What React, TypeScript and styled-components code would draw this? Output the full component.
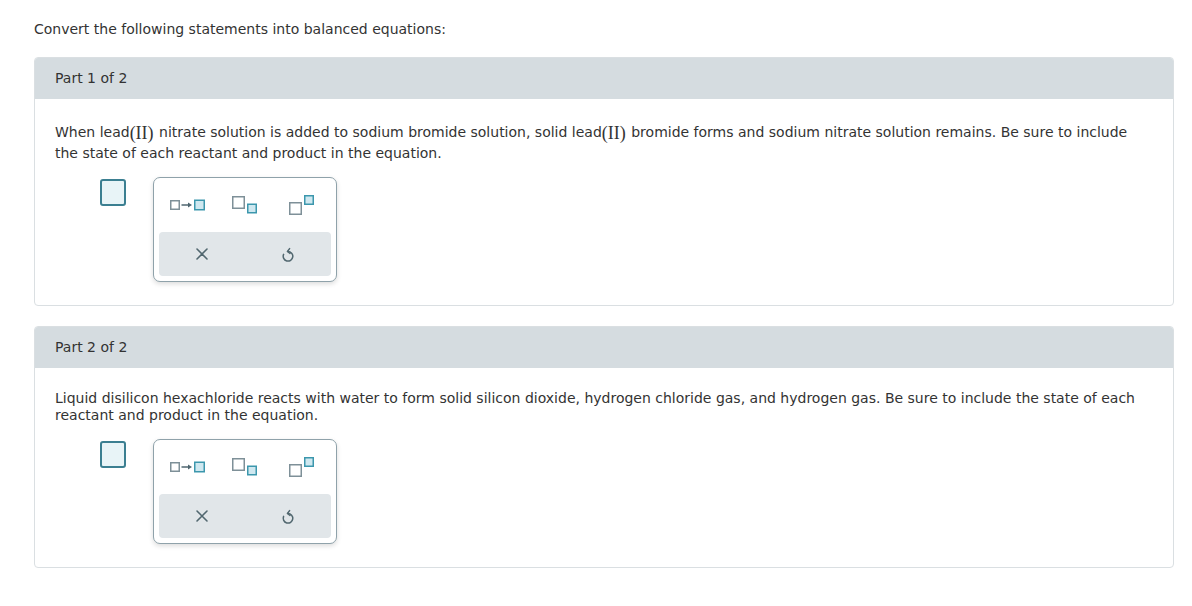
import React from "react";
import styled, { createGlobalStyle } from "styled-components";

const GlobalStyle = createGlobalStyle`
  html, body {
    margin: 0;
    padding: 0;
    background: #ffffff;
  }
  body {
    font-family: "DejaVu Sans", Verdana, sans-serif;
    font-size: 14px;
    color: #333333;
  }
`;

const Page = styled.div`
  padding: 21px 18px 20px 34px;
`;

const Intro = styled.p`
  margin: 0 0 19px 0;
  line-height: 17px;
`;

const Card = styled.section`
  border: 1px solid #dadfe2;
  border-radius: 4px;
  overflow: hidden;
  margin-bottom: 20px;
`;

const CardHeader = styled.div`
  height: 41px;
  display: flex;
  align-items: center;
  padding: 0 20px;
  background: #d5dce0;
  line-height: 17px;
`;

const CardBody = styled.div`
  padding: 22px 20px 23px 20px;
`;

const Statement = styled.p`
  margin: 0;
  line-height: 17px;
`;

const Math = styled.span`
  font-family: "Liberation Serif", "DejaVu Serif", serif;
  font-size: 18px;
  line-height: 24px;
  display: inline-block;
  vertical-align: -2px;
  margin: 0 1px 0 0;
`;

const EquationRow = styled.div`
  display: flex;
  align-items: flex-start;
  margin-top: 15px;
  padding-left: 45px;
  gap: 27px;
`;

const AnswerBox = styled.div`
  margin-top: 2px;
  width: 22px;
  height: 23px;
  border: 2px solid #3b7f91;
  border-radius: 3px;
  background: #e8f4f7;
`;

const Palette = styled.div`
  width: 172px;
  height: 98px;
  padding: 0 5px 5px 5px;
  border: 1px solid #8fa2aa;
  border-radius: 7px;
  background: #ffffff;
  box-shadow: 0 2px 5px rgba(0, 0, 0, 0.14);
  display: flex;
  flex-direction: column;
`;

const TemplateRow = styled.div`
  height: 54px;
  display: grid;
  grid-template-columns: repeat(3, 1fr);
  align-items: center;
  justify-items: center;
`;

const ToolButton = styled.button`
  border: none;
  background: transparent;
  padding: 0;
  display: flex;
  align-items: center;
  justify-content: center;
  cursor: pointer;
  line-height: 0;
`;

const ActionRow = styled.div`
  height: 44px;
  background: #e1e6e9;
  border-radius: 4px;
  display: grid;
  grid-template-columns: 1fr 1fr;
  align-items: center;
  justify-items: center;
`;

const GRAY = "#7e9098";
const TEAL = "#3c97ad";
const TEAL_FILL = "#cfe8f0";

const ArrowIcon = () => (
  <svg width="36" height="12" viewBox="0 0 36 12">
    <rect x="0.75" y="1.75" width="8.5" height="8.5" fill="#fff" stroke={GRAY} strokeWidth="1.5" />
    <line x1="11.5" y1="6" x2="19" y2="6" stroke="#4f6670" strokeWidth="1.5" />
    <polygon points="18,3.5 22,6 18,8.5" fill="#4f6670" />
    <rect x="24.75" y="1.25" width="9.5" height="9.5" fill={TEAL_FILL} stroke={TEAL} strokeWidth="1.5" />
  </svg>
);

const SubscriptIcon = () => (
  <svg width="26" height="18" viewBox="0 0 26 18">
    <rect x="0.75" y="0.75" width="11.5" height="11.5" fill="#fff" stroke={GRAY} strokeWidth="1.5" />
    <rect x="15.75" y="8.25" width="8.5" height="8.5" fill={TEAL_FILL} stroke={TEAL} strokeWidth="1.5" />
  </svg>
);

const SuperscriptIcon = () => (
  <svg width="26" height="20" viewBox="0 0 26 20">
    <rect x="0.75" y="7.75" width="11.5" height="11.5" fill="#fff" stroke={GRAY} strokeWidth="1.5" />
    <rect x="15.75" y="0.75" width="8.5" height="8.5" fill={TEAL_FILL} stroke={TEAL} strokeWidth="1.5" />
  </svg>
);

const ClearIcon = () => (
  <svg width="14" height="14" viewBox="0 0 14 14">
    <path d="M2 2 L12 12 M12 2 L2 12" stroke="#51676f" strokeWidth="1.6" strokeLinecap="round" />
  </svg>
);

const UndoIcon = () => (
  <svg width="14" height="18" viewBox="0 0 14 18">
    <path
      d="M7 6.5 A4.8 4.8 0 1 1 2.6 9.4"
      fill="none"
      stroke="#51676f"
      strokeWidth="1.5"
      strokeLinecap="round"
    />
    <path
      d="M8.6 3.6 L6.4 6.5 L9 8.4"
      fill="none"
      stroke="#51676f"
      strokeWidth="1.5"
      strokeLinecap="round"
      strokeLinejoin="round"
    />
  </svg>
);

const EquationEditor = () => (
  <EquationRow>
    <AnswerBox />
    <Palette>
      <TemplateRow>
        <ToolButton aria-label="reaction arrow">
          <ArrowIcon />
        </ToolButton>
        <ToolButton aria-label="subscript">
          <SubscriptIcon />
        </ToolButton>
        <ToolButton aria-label="superscript">
          <SuperscriptIcon />
        </ToolButton>
      </TemplateRow>
      <ActionRow>
        <ToolButton aria-label="clear">
          <ClearIcon />
        </ToolButton>
        <ToolButton aria-label="undo">
          <UndoIcon />
        </ToolButton>
      </ActionRow>
    </Palette>
  </EquationRow>
);

export default function App() {
  return (
    <>
      <GlobalStyle />
      <Page>
        <Intro>Convert the following statements into balanced equations:</Intro>
        <Card>
          <CardHeader>Part 1 of 2</CardHeader>
          <CardBody>
            <Statement>
              When lead<Math>(II)</Math> nitrate solution is added to sodium bromide solution, solid lead
              <Math>(II)</Math> bromide forms and sodium nitrate solution remains. Be sure to include the
              state of each reactant and product in the equation.
            </Statement>
            <EquationEditor />
          </CardBody>
        </Card>
        <Card>
          <CardHeader>Part 2 of 2</CardHeader>
          <CardBody>
            <Statement>
              Liquid disilicon hexachloride reacts with water to form solid silicon dioxide, hydrogen
              chloride gas, and hydrogen gas. Be sure to include the state of each reactant and product in
              the equation.
            </Statement>
            <EquationEditor />
          </CardBody>
        </Card>
      </Page>
    </>
  );
}
